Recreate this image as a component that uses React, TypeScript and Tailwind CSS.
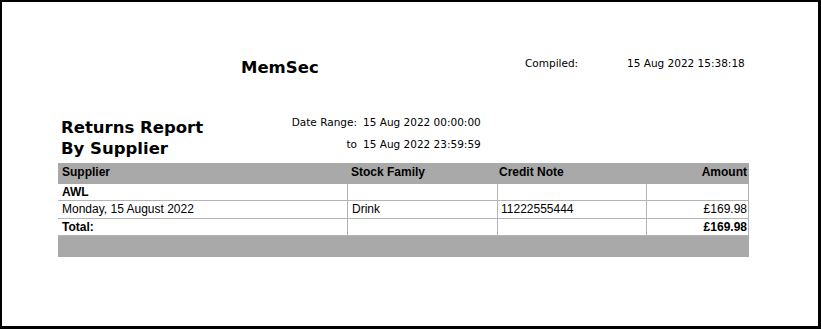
const tahoma = { fontFamily: '"DejaVu Sans", Verdana, sans-serif' };

const rows = [
  { supplier: 'AWL', family: '', note: '', amount: '', bold: true },
  { supplier: 'Monday, 15 August 2022', family: 'Drink', note: '11222555444', amount: '£169.98', bold: false },
  { supplier: 'Total:', family: '', note: '', amount: '£169.98', bold: true },
];

export default function App() {
  return (
    <div className="w-[821px] h-[329px] bg-white border-t-2 border-l-2 border-r-[3px] border-b-[3px] border-black text-black overflow-hidden">
      {/* page header */}
      <div className="flex items-start pt-[54px] h-[110px]" style={tahoma}>
        <div className="ml-[239px] w-[284px] pt-[2px] text-[16.5px] font-bold leading-[20px]">MemSec</div>
        <div className="w-[102px] text-[10.5px] leading-[14px]">Compiled:</div>
        <div className="text-[10.5px] leading-[14px]">15 Aug 2022 15:38:18</div>
      </div>

      {/* report title + date range */}
      <div className="flex items-start pl-[59px]" style={tahoma}>
        <div className="w-[200px] text-[16.5px] font-bold leading-[21px] pt-[5px]">
          <div>Returns Report</div>
          <div>By Supplier</div>
        </div>
        <div className="grid grid-cols-[96px_auto] content-start gap-x-[6px] gap-y-[8px] text-[10.5px] leading-[14px] pt-[3px]">
          <div className="text-right">Date Range:</div>
          <div>15 Aug 2022 00:00:00</div>
          <div className="text-right">to</div>
          <div>15 Aug 2022 23:59:59</div>
        </div>
      </div>

      {/* table */}
      <div
        className="ml-[56px] mt-[4px] w-[691px] text-[12px] leading-[14px]"
        style={{ fontFamily: '"Liberation Sans", Arial, sans-serif' }}
      >
        <div className="grid grid-cols-[289px_150px_149px_1fr] h-[21px] bg-[#a9a9a9] font-bold">
          <div className="pl-[4px] pt-[2px]">Supplier</div>
          <div className="pl-[4px] pt-[2px]">Stock Family</div>
          <div className="pl-[2px] pt-[2px]">Credit Note</div>
          <div className="pr-[2px] pt-[2px] text-right">Amount</div>
        </div>
        {rows.map((r, i) => (
          <div
            key={i}
            className={`grid grid-cols-[289px_150px_149px_1fr] border-b border-r border-[#b4b4b4] ${
              i === 1 ? 'h-[18px]' : 'h-[17px]'
            } ${r.bold ? 'font-bold' : ''}`}
          >
            <div className="pl-[4px] pt-[1px]">{r.supplier}</div>
            <div className="pl-[4px] pt-[1px] border-l border-[#b4b4b4]">{r.family}</div>
            <div className="pl-[3px] pt-[1px] border-l border-[#b4b4b4]">{r.note}</div>
            <div className="pr-[1px] pt-[1px] text-right border-l border-[#b4b4b4]">{r.amount}</div>
          </div>
        ))}
        <div className="h-[21px] bg-[#a9a9a9]" />
      </div>
    </div>
  );
}
